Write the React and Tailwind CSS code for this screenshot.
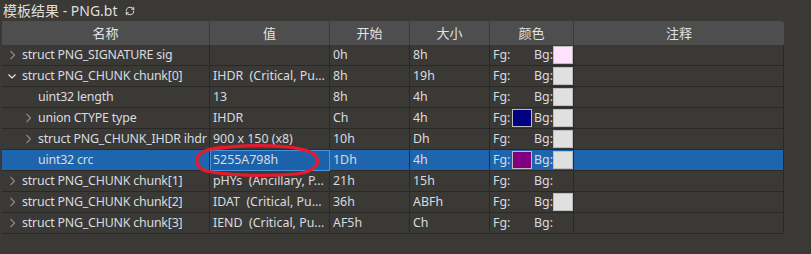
import React from 'react';
import { RefreshCw } from 'lucide-react';

const cols = ['w-[208px]', 'w-[120px]', 'w-[80px]', 'w-[80px]', 'w-[84px]', 'w-[210px]'];

const rows = [
  { depth: 0, arrow: 'closed', name: 'struct PNG_SIGNATURE sig', value: '', start: '0h', size: '8h', bg: '#ffe0ff' },
  { depth: 0, arrow: 'open', name: 'struct PNG_CHUNK chunk[0]', value: 'IHDR  (Critical, Pu...', start: '8h', size: '19h', bg: '#e0e0e0' },
  { depth: 1, name: 'uint32 length', value: '13', start: '8h', size: '4h', bg: '#e0e0e0' },
  { depth: 1, arrow: 'closed', name: 'union CTYPE type', value: 'IHDR', start: 'Ch', size: '4h', fg: '#000080', bg: '#e0e0e0' },
  { depth: 1, arrow: 'closed', name: 'struct PNG_CHUNK_IHDR ihdr', value: '900 x 150 (x8)', start: '10h', size: 'Dh', bg: '#e0e0e0' },
  { depth: 1, name: 'uint32 crc', value: '5255A798h', start: '1Dh', size: '4h', fg: '#800080', bg: '#e0e0e0', selected: true },
  { depth: 0, arrow: 'closed', name: 'struct PNG_CHUNK chunk[1]', value: 'pHYs  (Ancillary, P...', start: '21h', size: '15h' },
  { depth: 0, arrow: 'closed', name: 'struct PNG_CHUNK chunk[2]', value: 'IDAT  (Critical, Pu...', start: '36h', size: 'ABFh', bg: '#e0e0e0' },
  { depth: 0, arrow: 'closed', name: 'struct PNG_CHUNK chunk[3]', value: 'IEND  (Critical, Pu...', start: 'AF5h', size: 'Ch' },
];

function Arrow({ open }) {
  return open ? (
    <svg width="10" height="10" viewBox="0 0 10 10" className="shrink-0">
      <path d="M1.5 3.5 L5 7 L8.5 3.5" fill="none" stroke="#e6e6e6" strokeWidth="1.2" />
    </svg>
  ) : (
    <svg width="10" height="10" viewBox="0 0 10 10" className="shrink-0">
      <path d="M3.5 1 L7.5 5 L3.5 9" fill="none" stroke="#8a8a8a" strokeWidth="1.2" />
    </svg>
  );
}

function Swatch({ color }) {
  if (!color) return <div className="w-[20px] h-[18px] shrink-0" />;
  return <div className="w-[20px] h-[18px] shrink-0 border border-[#bdbdbd]" style={{ backgroundColor: color }} />;
}

function Row({ r }) {
  const base = r.selected ? 'bg-[#1f65ad]' : 'bg-[#3b3935]';
  const cell = 'h-[21px] shrink-0 border-r border-b border-[#2a2927] flex items-center overflow-hidden whitespace-pre';
  return (
    <div className={`flex ${base}`}>
      <div className={`${cols[0]} ${cell} gap-[3px] ${r.depth ? 'pl-[21px]' : 'pl-[5px]'}`}>
        {r.arrow ? <Arrow open={r.arrow === 'open'} /> : <span className="w-[10px] shrink-0" />}
        <span className="ml-[2px] tracking-[-0.2px]">{r.name}</span>
      </div>
      <div className={`${cols[1]} ${cell} pl-[3px] ${r.selected ? 'outline outline-1 -outline-offset-1 outline-[#4a94de] bg-[#1c62aa]' : ''}`}>{r.value}</div>
      <div className={`${cols[2]} ${cell} pl-[3px]`}>{r.start}</div>
      <div className={`${cols[3]} ${cell} pl-[3px]`}>{r.size}</div>
      <div className={`${cols[4]} ${cell} pl-[3px]`}>
        <span className="w-[19px] shrink-0">Fg:</span>
        <Swatch color={r.fg} />
        <span className="w-[21px] shrink-0 pl-[2px]">Bg:</span>
        <Swatch color={r.bg} />
      </div>
      <div className={`${cols[5]} ${cell}`} />
    </div>
  );
}

export default function App() {
  return (
    <div
      className="w-[811px] h-[254px] bg-[#3b3935] text-[#d8dce0] text-[12.4px] leading-none overflow-hidden relative"
      style={{ fontFamily: '"Noto Sans", "Noto Sans CJK SC", sans-serif' }}
    >
      <div className="h-[21px] flex items-center pl-[3px] gap-[7px] text-[14px] text-[#dedede]">
        <span>模板结果 - PNG.bt</span>
        <RefreshCw className="w-[10px] h-[10px] text-[#cfcfcf]" strokeWidth={2.5} />
      </div>

      <div className="flex">
        <div className="w-[2px]" />
        <div className="flex flex-col">
          <div className="flex h-[24px] bg-[#4e4e4e] rounded-tr-[3px] text-[#dfe3e8] text-[13px]">
            {['名称', '值', '开始', '大小', '颜色', '注释'].map((h, i) => (
              <div key={h} className={`${cols[i]} shrink-0 h-full flex items-center justify-center ${i < 5 ? 'border-r border-[#3a3a3a]' : ''}`}>
                {h}
              </div>
            ))}
          </div>
          {rows.map((r, i) => (
            <Row key={i} r={r} />
          ))}
        </div>
      </div>

      <svg className="absolute left-0 top-0 pointer-events-none" width="811" height="254">
        <path
          d="M214 149 C250 143 300 145 314 154 C322 162 316 172 296 174 C262 177 226 175 206 171 C194 167 194 156 205 151 C212 148 222 147 230 147"
          fill="none"
          stroke="#e41b2e"
          strokeWidth="3.2"
          strokeLinecap="round"
        />
      </svg>
    </div>
  );
}
